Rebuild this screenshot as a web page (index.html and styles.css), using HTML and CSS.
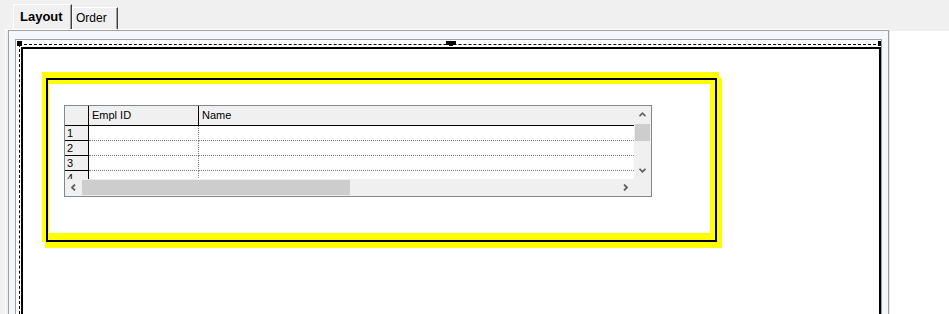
FILE: index.html
```html
<!DOCTYPE html>
<html>
<head>
<meta charset="utf-8">
<title>Layout</title>
<link rel="stylesheet" href="styles.css">
</head>
<body>
<div class="tabs">
  <div class="tab tab-active">Layout</div>
  <div class="tab tab-order">Order</div>
</div>
<div class="main">
  <div class="panel">
    <div class="panel-inner">
      <div class="surface">
        <span class="handle h-tl"></span>
        <span class="handle h-tc"></span>
        <span class="handle h-tr"></span>
        <div class="outline">
          <div class="form">
            <div class="frame">
              <div class="grid">
                <div class="grid-body">
                  <div class="grid-data">
                    <div class="grow ghead">
                      <div class="rh"></div>
                      <div class="c1">Empl ID</div>
                      <div class="c2">Name</div>
                    </div>
                    <div class="grow">
                      <div class="rh">1</div><div class="c1"></div><div class="c2"></div>
                    </div>
                    <div class="grow">
                      <div class="rh">2</div><div class="c1"></div><div class="c2"></div>
                    </div>
                    <div class="grow">
                      <div class="rh">3</div><div class="c1"></div><div class="c2"></div>
                    </div>
                    <div class="grow">
                      <div class="rh">4</div><div class="c1"></div><div class="c2"></div>
                    </div>
                  </div>
                  <div class="vscroll">
                    <div class="sbtn"><svg width="7" height="7" viewBox="0 0 7 7"><path d="M0.5 5.2 L3.5 2.2 L6.5 5.2" fill="none" stroke="#606060" stroke-width="1.8"/></svg></div>
                    <div class="vthumb"></div>
                    <div class="vspace"></div>
                    <div class="sbtn"><svg width="7" height="7" viewBox="0 0 7 7"><path d="M0.5 1.8 L3.5 4.8 L6.5 1.8" fill="none" stroke="#606060" stroke-width="1.8"/></svg></div>
                  </div>
                </div>
                <div class="hscroll">
                  <div class="sbtn"><svg width="7" height="7" viewBox="0 0 7 7"><path d="M5 0.5 L2 3.5 L5 6.5" fill="none" stroke="#606060" stroke-width="1.8"/></svg></div>
                  <div class="hthumb"></div>
                  <div class="hspace"></div>
                  <div class="sbtn"><svg width="7" height="7" viewBox="0 0 7 7"><path d="M2 0.5 L5 3.5 L2 6.5" fill="none" stroke="#606060" stroke-width="1.8"/></svg></div>
                  <div class="corner"></div>
                </div>
              </div>
            </div>
          </div>
        </div>
      </div>
    </div>
  </div>
  <div class="side"></div>
</div>
</body>
</html>
```
FILE: styles.css
```css
html, body {
  margin: 0;
  padding: 0;
}
body {
  background: #f0f0f0;
  font-family: "Liberation Sans", Arial, sans-serif;
  width: 949px;
  height: 314px;
  overflow: hidden;
  color: #000;
}
.tabs {
  height: 29px;
  box-sizing: border-box;
  display: flex;
  align-items: flex-end;
  padding-left: 13px;
}
.tab {
  box-sizing: border-box;
  background: #f0f0f0;
  border-left: 1px solid #fff;
  border-top: 1px solid #fff;
  border-right: 1px solid #404040;
  box-shadow: inset -1px 0 0 #a0a0a0;
  white-space: nowrap;
}
.tab-active {
  width: 59px;
  height: 25px;
  font-size: 13px;
  font-weight: bold;
  line-height: 15px;
  padding: 4px 0 0 6px;
}
.tab-order {
  width: 46px;
  height: 22px;
  font-size: 12px;
  line-height: 14px;
  padding: 3px 0 0 3px;
}
.main {
  display: flex;
  align-items: flex-start;
  height: 285px;
}
.panel {
  margin-left: 5px;
  width: 885px;
  height: 285px;
  box-sizing: border-box;
  border-left: 1px solid #fff;
  border-top: 1px solid #fff;
  border-right: 1px solid #e3e3e3;
  padding-left: 2px;
}
.panel-inner {
  height: 284px;
  box-sizing: border-box;
  border-left: 1px solid #a0a0a0;
  border-top: 1px solid #a0a0a0;
  border-right: 1px solid #a0a0a0;
  background: #f4f7fc;
  padding: 8px 6px 0 6px;
}
.surface {
  position: relative;
  height: 275px;
  box-sizing: border-box;
  background: #fff;
  border: 1px solid #a0a0a0;
  border-bottom: none;
  padding: 4px 0 0 3px;
}
.handle {
  position: absolute;
  background: #000;
  top: 1px;
  height: 4px;
}
.h-tl {
  left: 1px;
  width: 5px;
  height: 5px;
}
.h-tc {
  left: 430px;
  width: 10px;
}
.h-tc::after {
  content: "";
  position: absolute;
  left: 3px;
  top: 4px;
  width: 4px;
  height: 1px;
  background: #000;
}
.h-tr {
  left: 862px;
  width: 3px;
  height: 5px;
}
.outline {
  height: 270px;
  box-sizing: border-box;
  border-top: 1px dashed #000;
  border-left: 1px dashed #000;
  padding: 2px 0 0 1px;
}
.form {
  height: 267px;
  box-sizing: border-box;
  border: 2px solid #000;
  border-bottom: none;
  padding: 29px 0 0 23px;
}
.frame {
  width: 671px;
  height: 164px;
  box-sizing: border-box;
  border: 2px solid #000;
  box-shadow: -1px -3px 0 3px #ffff00, 2px 3px 0 3px #ffff00,
    inset 1px 0 0 0 #ffff00, inset -5px 0 0 0 #ffff00,
    inset 0 4px 0 0 #ffff00, inset 0 -7px 0 0 #ffff00;
  padding: 25px 0 0 16px;
}
.grid {
  width: 588px;
  height: 92px;
  box-sizing: border-box;
  border: 1px solid #828790;
  background: #f0f0f0;
  display: flex;
  flex-direction: column;
  font-size: 11px;
}
.grid-body {
  display: flex;
  height: 73px;
}
.grid-data {
  width: 569px;
  height: 73px;
  background: #fff;
  overflow: hidden;
}
.grow {
  display: flex;
  height: 15px;
}
.grow .rh {
  width: 24px;
  flex: none;
  box-sizing: border-box;
  background: #f0f0f0;
  border-right: 1px solid #000;
  border-bottom: 1px solid #000;
  line-height: 14px;
  padding-left: 2px;
}
.grow .c1 {
  width: 110px;
  flex: none;
  box-sizing: border-box;
  border-right: 1px dotted #808080;
  border-bottom: 1px dotted #808080;
}
.grow .c2 {
  flex: 1;
  border-bottom: 1px dotted #808080;
}
.ghead {
  height: 20px;
  background: #f0f0f0;
  border-bottom: 1px solid #000;
  box-sizing: border-box;
}
.ghead .rh,
.ghead .c1,
.ghead .c2 {
  border-bottom: none;
  line-height: 19px;
}
.ghead .c1 {
  border-right: 1px solid #000;
  padding-left: 3px;
}
.ghead .c2 {
  padding-left: 3px;
}
.vscroll {
  width: 17px;
  display: flex;
  flex-direction: column;
  background: #f0f0f0;
}
.sbtn {
  width: 17px;
  height: 17px;
  flex: none;
  display: flex;
  align-items: center;
  justify-content: center;
}
.vthumb {
  height: 17px;
  margin: 1px 1px 0 1px;
  background: #cdcdcd;
}
.vspace {
  flex: 1;
}
.hscroll {
  display: flex;
  height: 17px;
  background: #f0f0f0;
}
.hthumb {
  width: 268px;
  margin: 1px 0;
  background: #cdcdcd;
}
.hspace {
  flex: 1;
}
.corner {
  width: 17px;
  flex: none;
}
.side {
  flex: 1;
  height: 283px;
  margin-top: 2px;
  background: #fff;
}
```
